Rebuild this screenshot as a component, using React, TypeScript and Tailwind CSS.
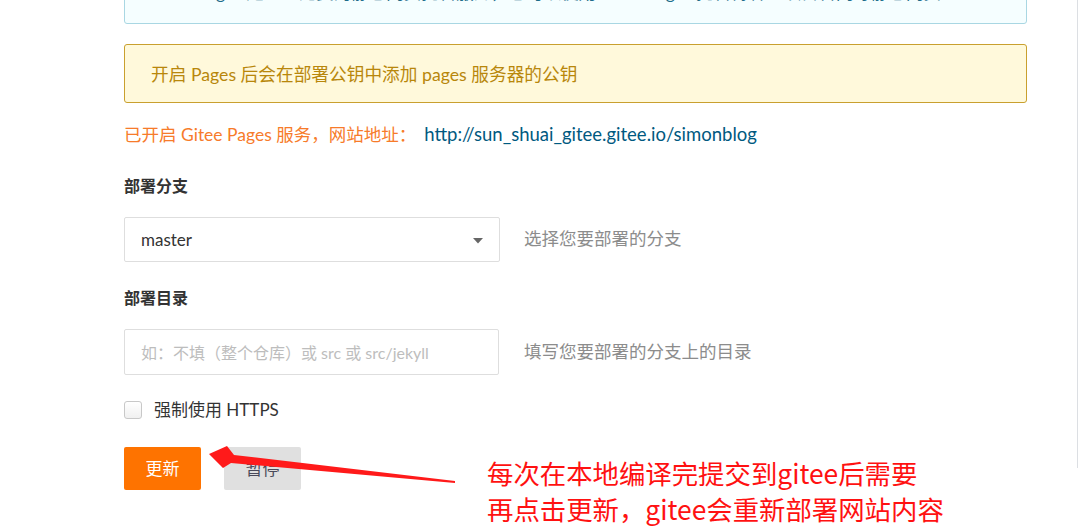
import { useState } from 'react';

const font = { fontFamily: 'Lato, "Noto Sans CJK SC", sans-serif' };

export default function App() {
  const [branch, setBranch] = useState('master');
  const [dir, setDir] = useState('');
  const [https, setHttps] = useState(false);

  return (
    <div className="relative w-full h-[531px] overflow-hidden bg-white" style={font}>
      <div className="w-[1078px] h-[506px] border-r border-[#dcdfe3] pl-[124px] pr-[50px]">
        {/* info box, scrolled partly out of view */}
        <div className="-mt-[38px] rounded-[3px] border border-[#a9d7e3] bg-[#f5feff] px-[26px] pt-[20px] pb-[20px] text-[17.5px] leading-[20px] text-[#1d6d8a]">
          Gitee Pages 是一个免费的静态网页托管服务，您可以使用 Gitee Pages 托管博客、项目官网等静态网页。
        </div>

        <div className="mt-[20px] rounded-[3px] border border-[#c9a02e] bg-[#fff9db] px-[26px] pt-[19px] pb-[17px] text-[17.7px] leading-[21px] text-[#b8870b]">
          开启 Pages 后会在部署公钥中添加 pages 服务器的公钥
        </div>

        <div className="mt-[19px] text-[17.5px] leading-[24px]">
          <span className="text-[#f77b2a]">已开启 Gitee Pages 服务，网站地址：</span>
          <a className="ml-[8px] text-[18.5px] text-[#005980]" href="#">http://sun_shuai_gitee.gitee.io/simonblog</a>
        </div>

        <div className="mt-[28px] text-[16px] leading-[22px] font-bold text-[#333]">部署分支</div>
        <div className="mt-[20px] flex items-center">
          <div className="relative flex h-[45px] w-[376px] items-center rounded-[2px] border border-[#dedede] bg-white pl-[16px]">
            <select
              value={branch}
              onChange={(e) => setBranch(e.target.value)}
              className="w-full appearance-none bg-transparent text-[17px] text-[#333] outline-none"
              style={font}
            >
              <option value="master">master</option>
            </select>
            <svg className="pointer-events-none absolute right-[16px] top-[20px]" width="10" height="6" viewBox="0 0 10 6">
              <path d="M0 0h10L5 5.5z" fill="#666" />
            </svg>
          </div>
          <span className="ml-[24px] text-[17.5px] text-[#8c8c8c]">选择您要部署的分支</span>
        </div>

        <div className="mt-[25px] text-[16px] leading-[22px] font-bold text-[#333]">部署目录</div>
        <div className="mt-[20px] flex items-center">
          <input
            value={dir}
            onChange={(e) => setDir(e.target.value)}
            placeholder="如：不填（整个仓库）或 src 或 src/jekyll"
            className="h-[46px] w-[375px] rounded-[2px] border border-[#dedede] px-[16px] text-[16px] text-[#333] outline-none placeholder:text-[#bdbdbd]"
            style={font}
          />
          <span className="ml-[25px] text-[17.5px] text-[#8c8c8c]">填写您要部署的分支上的目录</span>
        </div>

        <label className="mt-[26px] flex h-[18px] items-center">
          <input
            type="checkbox"
            checked={https}
            onChange={(e) => setHttps(e.target.checked)}
            className="h-[18px] w-[18px] appearance-none rounded-[3px] border border-[#c8c8c8] bg-gradient-to-b from-white to-[#f0f0f0]"
          />
          <span className="ml-[12px] text-[17px] text-[#333]">强制使用 HTTPS</span>
        </label>

        <div className="mt-[28px] flex gap-[23px]">
          <button className="h-[43px] w-[77px] rounded-[2px] bg-[#fe7300] text-[17px] text-white">更新</button>
          <button className="h-[43px] w-[77px] rounded-[2px] bg-[#e0e0e0] text-[17px] text-[#4a4a5a]">暂停</button>
        </div>
      </div>

      {/* annotation arrow */}
      <svg className="pointer-events-none absolute left-0 top-0" width="1082" height="531" viewBox="0 0 1082 531">
        <polygon
          points="209,454 227,446 234,455 455,481 455,483 231,463 223,468"
          fill="#ff1a1a"
        />
      </svg>

      <div
        className="pointer-events-none absolute left-[487px] top-[455px] text-[26.4px] leading-[36px] text-[#ff1111]"
        style={{ fontFamily: '"Noto Sans CJK SC", sans-serif' }}
      >
        <div>每次在本地编译完提交到gitee后需要</div>
        <div>再点击更新，gitee会重新部署网站内容</div>
      </div>
    </div>
  );
}
